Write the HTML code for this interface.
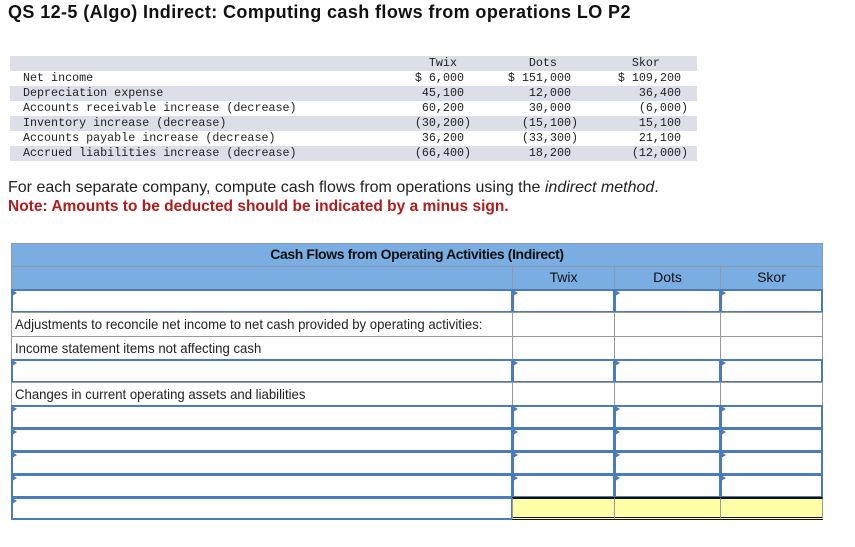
<!DOCTYPE html>
<html><head><style>
*{margin:0;padding:0;box-sizing:border-box}
body{width:855px;height:547px;background:#fff;position:relative;font-family:"Liberation Sans",sans-serif;overflow:hidden}
.a{position:absolute}
.mono{font-family:"Liberation Mono",monospace;font-size:11.7px;color:#222;white-space:pre;line-height:15px}
.band{position:absolute;left:10px;width:687px;height:15px;background:#dcdfe8}
.c{position:absolute;border:1px solid #999;background:#fff}
.i{position:absolute;border:2px solid #4a7cba;background:#fff}
.i::before{content:"";position:absolute;left:-1px;top:-1px;border-left:5px solid #4a7cba;border-top:3px solid transparent;border-bottom:3px solid transparent}
.h{position:absolute;background:#7aaee3;border:1px solid #8a9bb0;font-size:14px;color:#111;text-align:center;line-height:21px}
.lbl{font-size:14px;color:#222;line-height:22px;padding-left:3px;white-space:nowrap}
.lbl span{display:inline-block;transform:scaleX(0.94);transform-origin:left}
.y{position:absolute;background:#ffffa6;border:1px solid #999}
</style></head><body>
<div class="a" style="left:8px;top:2px;font-size:18px;font-weight:bold;color:#111;letter-spacing:0.4px">QS 12-5 (Algo) Indirect: Computing cash flows from operations LO P2</div>

<div class="band" style="top:56px"></div>
<div class="band" style="top:86px"></div>
<div class="band" style="top:116px"></div>
<div class="band" style="top:146px"></div>
<div class="a mono" style="left:23px;top:71px">Net income
Depreciation expense
Accounts receivable increase (decrease)
Inventory increase (decrease)
Accounts payable increase (decrease)
Accrued liabilities increase (decrease)</div>
<div class="a mono" style="left:390px;width:81px;top:56px;text-align:right">Twix  
$ 6,000 
45,100 
60,200 
(30,200)
36,200 
(66,400)</div>
<div class="a mono" style="left:490px;width:88px;top:56px;text-align:right">Dots   
$ 151,000 
12,000 
30,000 
(15,100)
(33,300)
18,200 </div>
<div class="a mono" style="left:600px;width:88px;top:56px;text-align:right">Skor    
$ 109,200 
36,400 
(6,000)
15,100 
21,100 
(12,000)</div>

<div class="a" style="left:8px;top:179px;font-size:16px;color:#222">For each separate company, compute cash flows from operations using the <i>indirect method</i>.</div>
<div class="a" style="left:8px;top:198px;font-size:15.5px;font-weight:bold;color:#b01c1c">Note: Amounts to be deducted should be indicated by a minus sign.</div>

<div class="h" style="left:11px;top:243px;width:812px;height:24px;font-weight:bold;letter-spacing:-0.4px">Cash Flows from Operating Activities (Indirect)</div>
<div class="h" style="left:11px;top:266px;width:502px;height:24px"></div>
<div class="h" style="left:512px;top:266px;width:103px;height:24px">Twix</div>
<div class="h" style="left:614px;top:266px;width:107px;height:24px">Dots</div>
<div class="h" style="left:720px;top:266px;width:103px;height:24px">Skor</div>

<div class="i" style="left:11px;top:289px;width:502px;height:24px"></div>
<div class="i" style="left:512px;top:289px;width:103px;height:24px"></div>
<div class="i" style="left:614px;top:289px;width:107px;height:24px"></div>
<div class="i" style="left:720px;top:289px;width:103px;height:24px"></div>

<div class="c lbl" style="left:11px;top:312px;width:502px;height:25px"><span>Adjustments to reconcile net income to net cash provided by operating activities:</span></div>
<div class="c" style="left:512px;top:312px;width:103px;height:25px"></div>
<div class="c" style="left:614px;top:312px;width:107px;height:25px"></div>
<div class="c" style="left:720px;top:312px;width:103px;height:25px"></div>

<div class="c lbl" style="left:11px;top:336px;width:502px;height:24px"><span>Income statement items not affecting cash</span></div>
<div class="c" style="left:512px;top:336px;width:103px;height:24px"></div>
<div class="c" style="left:614px;top:336px;width:107px;height:24px"></div>
<div class="c" style="left:720px;top:336px;width:103px;height:24px"></div>

<div class="i" style="left:11px;top:359px;width:502px;height:24px"></div>
<div class="i" style="left:512px;top:359px;width:103px;height:24px"></div>
<div class="i" style="left:614px;top:359px;width:107px;height:24px"></div>
<div class="i" style="left:720px;top:359px;width:103px;height:24px"></div>

<div class="c lbl" style="left:11px;top:382px;width:502px;height:24px"><span>Changes in current operating assets and liabilities</span></div>
<div class="c" style="left:512px;top:382px;width:103px;height:24px"></div>
<div class="c" style="left:614px;top:382px;width:107px;height:24px"></div>
<div class="c" style="left:720px;top:382px;width:103px;height:24px"></div>

<div class="i" style="left:11px;top:405px;width:502px;height:24px"></div>
<div class="i" style="left:512px;top:405px;width:103px;height:24px"></div>
<div class="i" style="left:614px;top:405px;width:107px;height:24px"></div>
<div class="i" style="left:720px;top:405px;width:103px;height:24px"></div>

<div class="i" style="left:11px;top:428px;width:502px;height:24px"></div>
<div class="i" style="left:512px;top:428px;width:103px;height:24px"></div>
<div class="i" style="left:614px;top:428px;width:107px;height:24px"></div>
<div class="i" style="left:720px;top:428px;width:103px;height:24px"></div>

<div class="i" style="left:11px;top:451px;width:502px;height:24px"></div>
<div class="i" style="left:512px;top:451px;width:103px;height:24px"></div>
<div class="i" style="left:614px;top:451px;width:107px;height:24px"></div>
<div class="i" style="left:720px;top:451px;width:103px;height:24px"></div>

<div class="i" style="left:11px;top:474px;width:502px;height:24px"></div>
<div class="i" style="left:512px;top:474px;width:103px;height:24px"></div>
<div class="i" style="left:614px;top:474px;width:107px;height:24px"></div>
<div class="i" style="left:720px;top:474px;width:103px;height:24px"></div>

<div class="i" style="left:11px;top:497px;width:502px;height:23px"></div>
<div class="y" style="left:512px;top:497px;width:103px;height:23px;border-top:2px solid #111;border-bottom:3px double #111"></div>
<div class="y" style="left:614px;top:497px;width:107px;height:23px;border-top:2px solid #111;border-bottom:3px double #111"></div>
<div class="y" style="left:720px;top:497px;width:103px;height:23px;border-top:2px solid #111;border-bottom:3px double #111"></div>
</body></html>
